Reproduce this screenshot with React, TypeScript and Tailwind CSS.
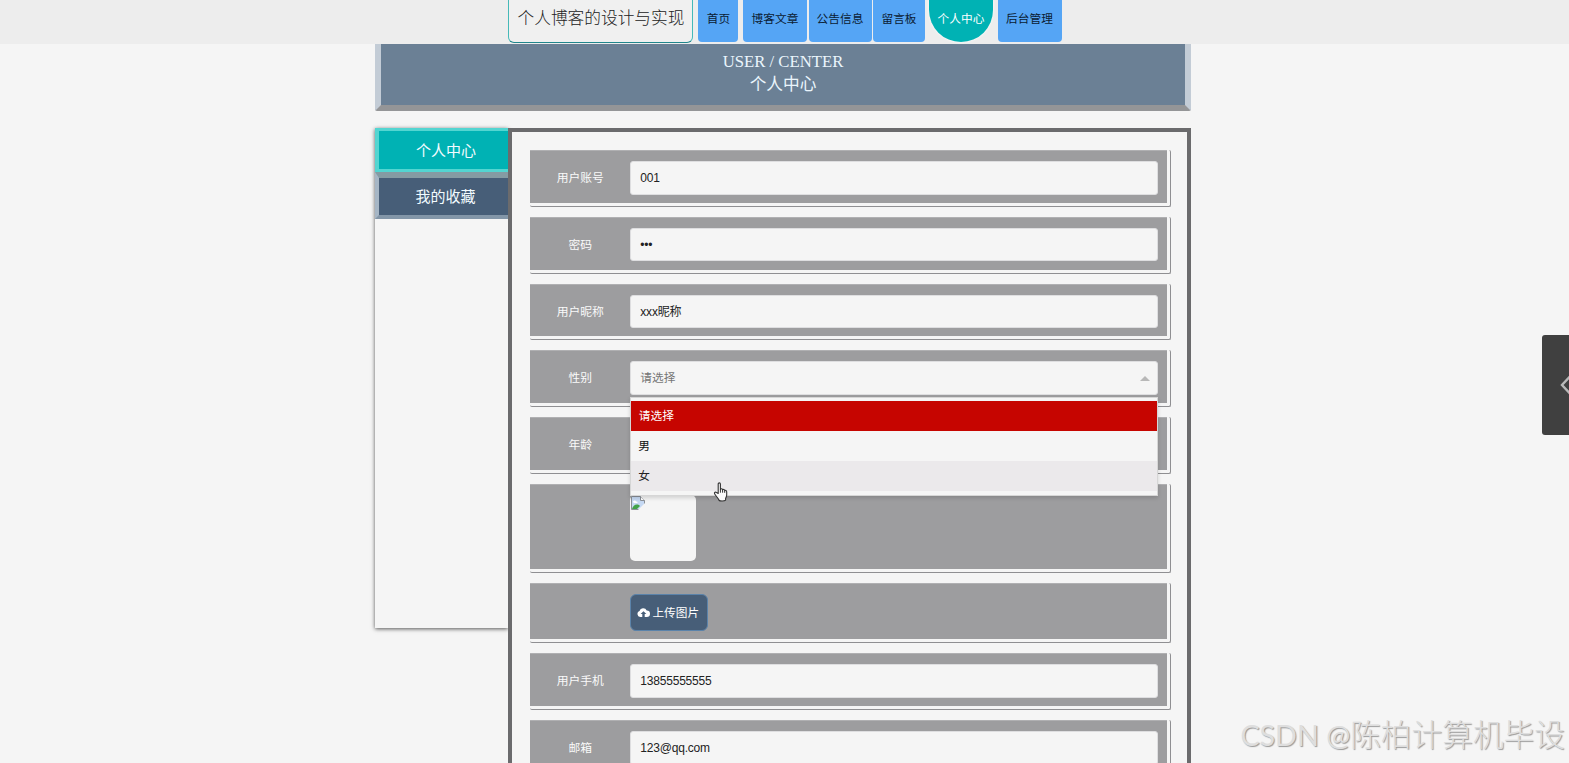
import type { ReactNode } from "react";

const navItems = [
  { label: "首页", box: "w-[40px] ml-[5px] pl-[1px] rounded-b-[4px] bg-[#55a5f5] text-[#0b1c33]" },
  { label: "博客文章", box: "w-[64px] ml-[5px] rounded-b-[4px] bg-[#55a5f5] text-[#0b1c33]" },
  { label: "公告信息", box: "w-[63px] ml-[1.5px] rounded-b-[4px] bg-[#55a5f5] text-[#0b1c33]" },
  { label: "留言板", box: "w-[52px] ml-[1.5px] rounded-b-[4px] bg-[#55a5f5] text-[#0b1c33]" },
  { label: "个人中心", box: "w-[64px] ml-[4px] rounded-b-[32px] bg-[#00b2b4] text-white shadow-[0_0_3px_#ffffff]" },
  { label: "后台管理", box: "w-[64px] ml-[4.5px] rounded-b-[4px] bg-[#55a5f5] text-[#0b1c33]" },
];

function Row({ label, height = "h-[56.67px]", children }: { label?: string; height?: string; children?: ReactNode }) {
  return (
    <div className={`${height} w-full shrink-0 rounded-[2px] border-r-[1.5px] border-b-[1.5px] border-[#8f8f92] pr-[3px] pb-[3px]`}>
      <div className="flex h-full items-start bg-[#9d9d9f] pt-[11px] shadow-[inset_0_1px_0_#b0b0b2]">
        <div className="h-[33px] w-[100px] shrink-0 text-center text-[11.8px] leading-[35px] text-[#fafafa]">{label}</div>
        {children}
      </div>
    </div>
  );
}

function Field({ value }: { value: string }) {
  return (
    <div className="h-[33.5px] w-[528px] rounded-[3px] border border-[#dedee0] bg-[#f5f5f5] pl-[9px] text-[12px] leading-[32px] tracking-[-0.2px] text-[#222]">
      {value}
    </div>
  );
}

function SelectField() {
  return (
    <div className="relative h-[33.5px] w-[528px]">
      <div className="flex h-full items-center justify-between rounded-[3px] border border-[#dedee0] bg-[#f5f5f5] pr-[7px] pl-[9px] text-[11.7px] text-[#757575]">
        <span>请选择</span>
        <svg width="10" height="5" viewBox="0 0 10 5"><path d="M0 5 5 0l5 5Z" fill="#b8b8b8" /></svg>
      </div>
      <div className="absolute top-[35.5px] left-0 z-10 h-[99px] w-[528px] border border-[#d6d6d6] bg-[#f5f5f5] pt-[3px] text-[11.7px] leading-[30px] shadow-[0_2px_4px_rgba(0,0,0,0.15)]">
        <div className="h-[30px] bg-[#c60500] pl-[7.5px] text-white">请选择</div>
        <div className="h-[30px] pl-[7px] text-[#111]">男</div>
        <div className="h-[30px] bg-[#ebe9eb] pl-[7px] text-[#222]">女</div>
        <svg className="absolute top-[84px] left-[82px]" width="16" height="20" viewBox="0 0 16 20">
          <path
            d="M5.2 11.5V2.1C5.2.5 7.4.5 7.4 2.1v5.5c.2-1.2 2.2-1 2.2.3.3-.9 2.1-.6 2.1.7.5-.7 2-.2 2 1.1v3.4c0 1.5-.7 2.3-1.1 3.4v1.6c-1 1.2-6 1.2-6.7 0-.4-1.8-3.2-4.1-4.3-6.3-.7-1.4.9-2.2 1.9-1.3Z"
            fill="#fafafa" stroke="#333" strokeWidth="1.1" strokeLinejoin="round"
          />
          <path d="M7.4 7.5v3.2M9.6 8v2.7M11.7 8.8v2" fill="none" stroke="#333" />
        </svg>
      </div>
    </div>
  );
}

export default function App() {
  return (
    <div className="relative h-[763px] w-full overflow-hidden bg-[#f5f5f5] font-['Liberation_Sans','Noto_Sans_CJK_SC',sans-serif]">
      <header className="flex h-[44px] items-start bg-[#ededed] pl-[508px] whitespace-nowrap">
        <div className="h-[43px] w-[185px] rounded-b-[6px] border border-t-0 border-[#20868c] border-l-[#45b9b8] border-r-[#45b9b8] bg-[#f0f0f0] pl-px text-center text-[16.7px] leading-[38px] font-light text-[#222]">
          个人博客的设计与实现
        </div>
        <nav className="flex">
          {navItems.map((item) => (
            <a key={item.label} className={`h-[42px] text-center text-[11.7px] leading-[38px] ${item.box}`}>
              {item.label}
            </a>
          ))}
        </nav>
      </header>

      <div className="ml-[375px] w-[816px]">
        <div className="h-[67px] rounded-b-[2px] border-x-[6px] border-b-[6px] border-[#c3ccd6] border-b-[#949597] bg-[#6b8095] pt-[6px] text-center font-['Liberation_Serif','Noto_Sans_CJK_SC',serif] text-[16.7px] leading-[23px] text-[#eaf5fc]">
          <div>USER / CENTER</div>
          <div>个人中心</div>
        </div>

        <div className="mt-[17px] flex items-start">
          <aside className="h-[500px] w-[133px] bg-[#f5f5f5] text-[15px] text-[#f2fbff] shadow-[0_1px_4px_rgba(0,0,0,0.65)]">
            <div className="h-[44px] border-t-[3px] border-b-[3px] border-l-4 border-[#53d5d1] bg-[#00b2b4] pl-[5px] text-center leading-[39px]">
              个人中心
            </div>
            <div className="h-[47px] border-t-[6px] border-b-4 border-l-4 border-t-[#859ba3] border-b-[#8396a8] border-l-[#a6b6c5] bg-[#475e78] pl-[4px] text-center leading-[37px]">
              我的收藏
            </div>
          </aside>
          <main className="relative h-[700px] w-[683px] border-4 border-[#6b6b6d] bg-[#f5f5f5] pt-[18.3px] pl-[18.3px]">
            <form className="flex w-[641px] flex-col gap-[10px]">
              <Row label="用户账号"><Field value="001" /></Row>
              <Row label="密码"><Field value="•••" /></Row>
              <Row label="用户昵称"><Field value="xxx昵称" /></Row>
              <Row label="性别"><SelectField /></Row>
              <Row label="年龄"><Field value="" /></Row>
              <Row height="h-[89.8px]">
                <div className="h-[66px] w-[66px] rounded-[5px] bg-[#f5f5f5] pt-[1px] pl-[1px]">
                  <svg width="14" height="14" viewBox="0 0 14 14">
                    <path d="M.5.5h9l4 4v9H.5Z" fill="#c6d9f3" stroke="#8b9097" />
                    <path d="M9.5.5v4h4" fill="#fff" stroke="#8b9097" />
                    <path d="M2 6c0-2 3-2 3-.5C7 5 7 7 6 7H3Z" fill="#fff" />
                    <path d="M1 13c1-4 5-6 8-3l-3 3Z" fill="#42a34a" />
                    <path d="M7 14 14 7v7Z" fill="#f5f5f5" />
                  </svg>
                </div>
              </Row>
              <Row height="h-[60px]">
                <div className="flex h-[37px] w-[78px] items-center justify-center rounded-[6px] border border-[#5b83aa] bg-[#475e78] pr-[2px] text-[11.7px] whitespace-nowrap text-white">
                  <svg className="mr-[2px]" width="13" height="10" viewBox="0 0 13 10">
                    <path d="M3.2 9A3.1 3.1 0 0 1 2.5 3 3.8 3.8 0 0 1 9.7 2.5 3.2 3.2 0 0 1 9.8 9Z" fill="#fff" />
                    <path d="m3.6 6.1 2.9-2.9 2.9 2.9H7.7V9.2H5.3V6.1Z" fill="#475e78" />
                  </svg>
                  上传图片
                </div>
              </Row>
              <Row label="用户手机"><Field value="13855555555" /></Row>
              <Row label="邮箱"><Field value="123@qq.com" /></Row>
            </form>
          </main>
        </div>
      </div>

      <div className="absolute top-[335px] right-0 flex h-[100px] w-[27px] items-center justify-end overflow-hidden rounded-l-[3px] bg-[#404040]">
        <svg width="9" height="20" viewBox="0 0 9 20"><path d="M10 1.5 2 10l8 8.5" fill="none" stroke="#b8b8b8" strokeWidth="2.4" /></svg>
      </div>
      <div className="absolute right-[4px] bottom-[3px] text-[30.7px] leading-[48px] font-light whitespace-nowrap text-[#dedede] [text-shadow:1px_1px_1px_#999]">
        <span className="font-['Lato','Liberation_Sans',sans-serif] text-[28.7px] font-normal">CSDN @</span>陈柏计算机毕设
      </div>
    </div>
  );
}
